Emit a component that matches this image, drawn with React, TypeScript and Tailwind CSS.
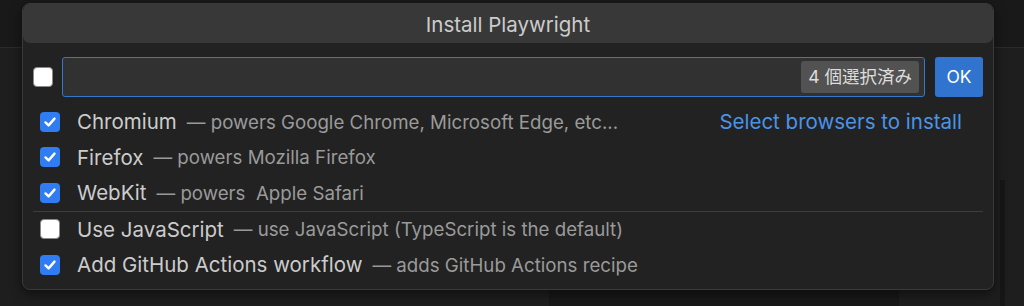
import React from 'react';

type Option = { label: string; hint: string; checked: boolean };

const browsers: Option[] = [
  { label: 'Chromium', hint: '— powers Google Chrome, Microsoft Edge, etc...', checked: true },
  { label: 'Firefox', hint: '— powers Mozilla Firefox', checked: true },
  { label: 'WebKit', hint: '— powers  Apple Safari', checked: true },
];

const extras: Option[] = [
  { label: 'Use JavaScript', hint: '— use JavaScript (TypeScript is the default)', checked: false },
  { label: 'Add GitHub Actions workflow', hint: '— adds GitHub Actions recipe', checked: true },
];

const Check = ({ checked }: { checked: boolean }) =>
  checked ? (
    <span className="w-5 h-5 rounded-[4px] bg-[#2f7cf3] flex items-center justify-center shrink-0">
      <svg width="14" height="14" viewBox="0 0 14 14" fill="none">
        <path d="M2.5 7.4 L5.6 10.4 L11.5 3.6" stroke="white" strokeWidth="2.4" strokeLinecap="round" strokeLinejoin="round" />
      </svg>
    </span>
  ) : (
    <span className="w-5 h-5 rounded-[4px] bg-white border border-[#8a8a8a] shrink-0" />
  );

const Row = ({ opt, children }: { opt: Option; children?: React.ReactNode }) => (
  <div className="h-[35.5px] flex items-center pl-[17px] pr-[31px]">
    <Check checked={opt.checked} />
    <span className="ml-[17px] pt-[2px] text-[20.5px] text-[#cccccc] whitespace-pre">{opt.label}</span>
    <span className="ml-[10px] pt-[2px] text-[18.7px] text-[#9a9a9a] whitespace-pre">{opt.hint}</span>
    {children}
  </div>
);

export default function App() {
  return (
    <div className="relative w-[1024px] h-[306px] overflow-hidden bg-[#1e1e1e] font-['Inter',sans-serif]">
      {/* background workbench behind the quick pick */}
      <div className="absolute left-0 top-0 w-full h-[48px] bg-[#191919] border-b border-[#2b2b2b]" />
      <div className="absolute left-[549px] top-[290px] w-[350px] h-[16px] bg-[#181818]" />
      <div className="absolute left-[1000px] top-[180px] w-[5px] h-[126px] bg-[#161616]" />

      <div className="relative ml-[22px] mt-[3px] w-[972px] h-[287px] rounded-[8px] border border-[#3a3a3a] bg-[#222222] shadow-[0_4px_12px_rgba(0,0,0,0.5)] flex flex-col">
        <div className="h-[39px] pt-[3px] rounded-[7px] bg-[#383838] flex items-center justify-center text-[20.5px] text-[#cccccc]">
          Install Playwright
        </div>

        <div className="mt-[14px] flex items-center pl-[10px] pr-[10px]">
          <span className="w-5 h-5 rounded-[4px] bg-white border border-[#8a8a8a] shrink-0" />
          <div className="ml-[9px] flex-1 h-10 rounded-[3px] border border-[#3477cb] bg-[#313131] flex items-center justify-end pr-[5px]">
            <span className="h-8 px-[7px] rounded-[3px] bg-[#525252] text-[#dddddd] text-[17.5px] flex items-center font-['Inter','Noto_Sans_CJK_JP',sans-serif]">
              4 個選択済み
            </span>
          </div>
          <button className="ml-[10px] w-12 h-10 rounded-[3px] bg-[#3174cf] text-white text-[17.5px]">OK</button>
        </div>

        <div className="mt-[7px] flex flex-col">
          {browsers.map((b, i) => (
            <Row key={b.label} opt={b}>
              {i === 0 && <span className="ml-auto pt-[2px] text-[20.5px] text-[#4b94e6]">Select browsers to install</span>}
            </Row>
          ))}
          <div className="mx-[10px] h-px bg-[#3d3d3d]" />
          {extras.map((e) => (
            <Row key={e.label} opt={e} />
          ))}
        </div>
      </div>
    </div>
  );
}
